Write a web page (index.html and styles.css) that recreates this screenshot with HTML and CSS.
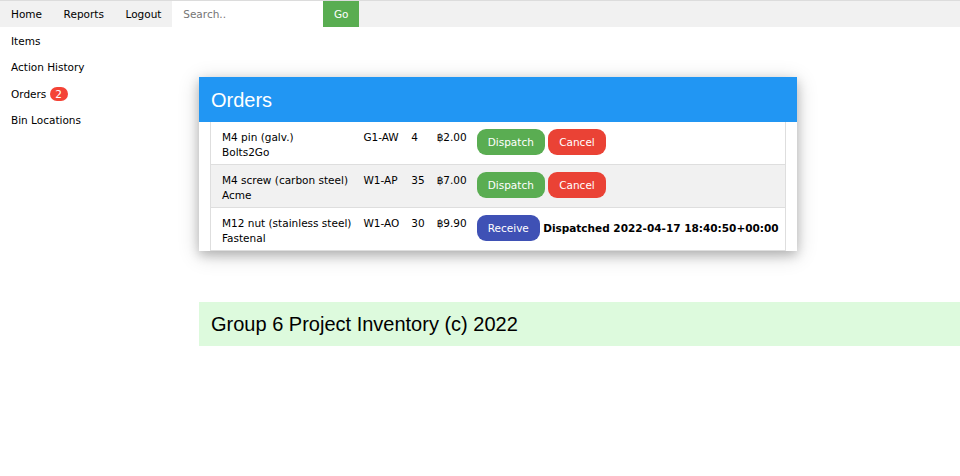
FILE: index.html
```html
<!DOCTYPE html>
<html lang="en">
<head>
    <meta charset="UTF-8">
    <meta name="viewport" content="width=device-width, initial-scale=1.0">
    <title>Orders - Group 6 Project Inventory</title>
    <link rel="stylesheet" href="styles.css">
</head>
<body>
    <div class="topBar">
        <a href="#" class="barItem">Home</a>
        <a href="#" class="barItem">Reports</a>
        <a href="#" class="barItem">Logout</a>
        <input type="text" class="searchInput" placeholder="Search..">
        <button class="goButton">Go</button>
    </div>

    <div class="page">
        <div class="sideBar">
            <a href="#" class="sideItem">Items</a>
            <a href="#" class="sideItem">Action History</a>
            <a href="#" class="sideItem">Orders <span class="badge">2</span></a>
            <a href="#" class="sideItem">Bin Locations</a>
        </div>

        <div class="mainArea">
            <div class="ordersCard">
                <div class="cardHeader">Orders</div>
                <div class="tableWrap">
                    <table class="ordersTable">
                        <tr>
                            <td>M4 pin (galv.)<br>Bolts2Go</td>
                            <td>G1-AW</td>
                            <td>4</td>
                            <td>฿2.00</td>
                            <td><button class="pill green">Dispatch</button> <button class="pill red">Cancel</button></td>
                        </tr>
                        <tr>
                            <td>M4 screw (carbon steel)<br>Acme</td>
                            <td>W1-AP</td>
                            <td>35</td>
                            <td>฿7.00</td>
                            <td><button class="pill green">Dispatch</button> <button class="pill red">Cancel</button></td>
                        </tr>
                        <tr>
                            <td>M12 nut (stainless steel)<br>Fastenal</td>
                            <td>W1-AO</td>
                            <td>30</td>
                            <td>฿9.90</td>
                            <td><button class="pill indigo">Receive</button> <b>Dispatched 2022-04-17 18:40:50+00:00</b></td>
                        </tr>
                    </table>
                </div>
            </div>

            <div class="footer">Group 6 Project Inventory (c) 2022</div>
        </div>
    </div>
</body>
</html>
```

FILE: styles.css
```css
body {
    margin: 0;
    font-family: "DejaVu Sans", Verdana, sans-serif;
    font-size: 10.5px;
    color: #000;
    background: #fff;
}

a {
    color: inherit;
    text-decoration: none;
}

/* top navigation */
.topBar {
    display: flex;
    height: 26px;
    background: #f1f1f1;
    border-top: 1px solid #dcdcdc;
}

.barItem {
    padding: 0 10.8px;
    line-height: 27px;
}

.barItem:first-child {
    padding-left: 11px;
}

.searchInput {
    width: 151px;
    box-sizing: border-box;
    padding: 0 11px;
    border: none;
    outline: none;
    background: #fff;
    font-family: inherit;
    font-size: 10.5px;
}

.searchInput::placeholder {
    color: #757575;
}

.goButton {
    width: 36px;
    border: none;
    background: #59ad51;
    color: #fff;
    font-family: inherit;
    font-size: 10.5px;
    cursor: pointer;
}

/* page body */
.page {
    display: flex;
}

.sideBar {
    width: 199px;
    flex-shrink: 0;
    display: flex;
    flex-direction: column;
    padding-top: 0.5px;
}

.sideItem {
    height: 12.5px;
    padding: 7px 11px;
    line-height: 12.5px;
}

.badge {
    display: inline-block;
    min-width: 18px;
    height: 14px;
    line-height: 14px;
    border-radius: 7px;
    background: #f44336;
    color: #fff;
    text-align: center;
    vertical-align: top;
    margin-top: -1px;
}

.mainArea {
    flex: 1;
    padding-top: 50px;
}

/* orders card */
.ordersCard {
    width: 598px;
    background: #fff;
    box-shadow: 0 4px 10px 0 rgba(0, 0, 0, 0.2), 0 4px 20px 0 rgba(0, 0, 0, 0.19);
}

.cardHeader {
    height: 45px;
    line-height: 46px;
    padding-left: 12px;
    background: #2196f3;
    color: #fff;
    font-family: "Liberation Sans", Arial, sans-serif;
    font-size: 20px;
}

.tableWrap {
    padding: 0 12px 0 11px;
}

.ordersTable {
    width: 100%;
    border-collapse: collapse;
    border: 1px solid #dedede;
    border-top: none;
}

.ordersTable tr {
    border-bottom: 1px solid #dedede;
}

.ordersTable tr:last-child {
    border-bottom: none;
}

.ordersTable tr:nth-child(even) {
    background: #f1f1f1;
}

.ordersTable td {
    height: 30px;
    padding: 8px 6px 4px 6px;
    line-height: 15px;
    vertical-align: top;
    white-space: nowrap;
}

.ordersTable td:first-child {
    padding-left: 11px;
}

.ordersTable td:last-child {
    vertical-align: middle;
    padding: 5px 6px 7px 4px;
}

.pill {
    height: 26px;
    padding: 0 11px;
    border: none;
    border-radius: 9px;
    color: #fff;
    font-family: inherit;
    font-size: 10.5px;
    cursor: pointer;
}

.green {
    background: #5aad52;
}

.red {
    background: #ea4235;
}

.indigo {
    background: #3f51b5;
}

/* footer */
.footer {
    margin-top: 51px;
    height: 44px;
    line-height: 45px;
    padding-left: 12px;
    background: #ddfadd;
    font-family: "Liberation Sans", Arial, sans-serif;
    font-size: 20px;
}
```
